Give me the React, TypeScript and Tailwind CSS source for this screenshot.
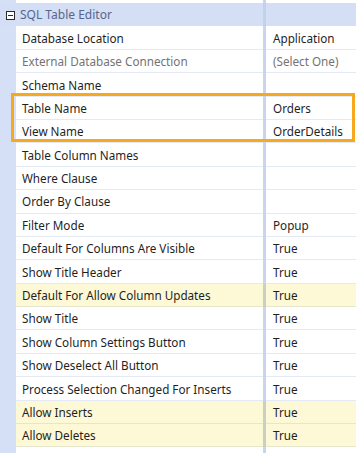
import React from "react";

type Row = { label: string; value?: string; yellow?: boolean; muted?: boolean };

const rows: Row[] = [
  { label: "Database Location", value: "Application" },
  { label: "External Database Connection", value: "(Select One)", muted: true },
  { label: "Schema Name" },
  { label: "Table Name", value: "Orders" },
  { label: "View Name", value: "OrderDetails" },
  { label: "Table Column Names" },
  { label: "Where Clause" },
  { label: "Order By Clause" },
  { label: "Filter Mode", value: "Popup" },
  { label: "Default For Columns Are Visible", value: "True" },
  { label: "Show Title Header", value: "True" },
  { label: "Default For Allow Column Updates", value: "True", yellow: true },
  { label: "Show Title", value: "True" },
  { label: "Show Column Settings Button", value: "True" },
  { label: "Show Deselect All Button", value: "True" },
  { label: "Process Selection Changed For Inserts", value: "True" },
  { label: "Allow Inserts", value: "True", yellow: true },
  { label: "Allow Deletes", value: "True", yellow: true },
];

function GridRow({ row }: { row: Row }) {
  const bg = row.yellow ? "bg-[#fdf9d7]" : "bg-white";
  const line = row.yellow ? "border-[#e6e6cf]" : "border-[#e3e9f5]";
  const text = row.muted ? "text-[#737373]" : "text-[#1f1f1f]";
  return (
    <div className="flex h-[23.4px] shrink-0">
      <div className="w-[16px] shrink-0 bg-[#d5dff6]" />
      <div className={`w-[247px] shrink-0 ${bg} border-b ${line} flex items-center pl-[6px] pt-[2px] ${text} whitespace-nowrap overflow-hidden`}>
        {row.label}
      </div>
      <div className={`w-[3px] shrink-0 ${row.yellow ? "bg-[#c7d0c2]" : "bg-[#c8d5ef]"}`} />
      <div className={`flex-1 ${bg} border-b ${line} flex items-center pl-[7px] pt-[2px] ${text} whitespace-nowrap overflow-hidden`}>
        {row.value ?? ""}
      </div>
    </div>
  );
}

export default function App() {
  return (
    <div
      className="relative w-[356px] h-[453px] overflow-hidden bg-white text-[11.7px] leading-none flex flex-col"
      style={{ fontFamily: '"Noto Sans", "Open Sans", sans-serif' }}
    >
      {/* partial row at top */}
      <div className="flex h-[3px] shrink-0">
        <div className="w-[16px] shrink-0 bg-[#d5dff6]" />
        <div className="w-[247px] shrink-0 bg-white" />
        <div className="w-[3px] shrink-0 bg-[#c8d5ef]" />
        <div className="flex-1 bg-white" />
      </div>
      {/* category header */}
      <div className="flex h-[23.4px] shrink-0 bg-[#d4def5]">
        <div className="w-[263px] shrink-0 flex items-center pt-[1px]">
          <div className="ml-[6px] w-[9px] h-[9px] border border-[#2b2b2b] bg-white flex items-center justify-center">
            <div className="w-[5px] h-[1px] bg-[#2b2b2b]" />
          </div>
          <span className="ml-[5px] text-[#56678a] text-[12px]">SQL Table Editor</span>
        </div>
        <div className="w-[3px] shrink-0 bg-[#c3d1ee]" />
        <div className="flex-1" />
      </div>
      {rows.map((r) => (
        <GridRow key={r.label} row={r} />
      ))}
      <div className="flex flex-1">
        <div className="w-[16px] shrink-0 bg-[#d5dff6]" />
        <div className="w-[247px] shrink-0 bg-white" />
        <div className="w-[3px] shrink-0 bg-[#c8d5ef]" />
        <div className="flex-1 bg-white" />
      </div>
      {/* highlight annotation */}
      <div className="absolute left-[11px] top-[93px] w-[344px] h-[49px] border-[3px] border-[#f6a91e] pointer-events-none" />
    </div>
  );
}
